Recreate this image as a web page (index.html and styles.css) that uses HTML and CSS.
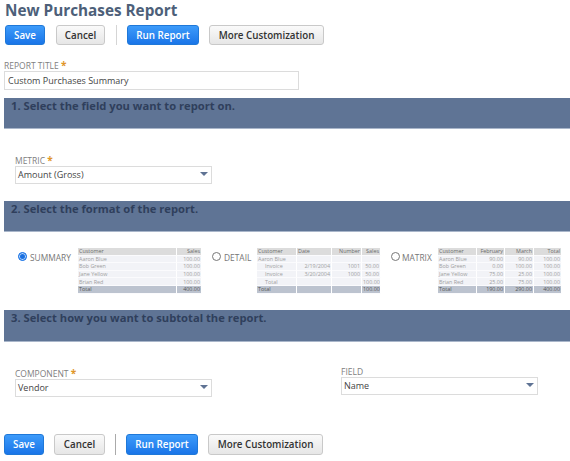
FILE: index.html
```html
<!DOCTYPE html>
<html>
<head>
    <title>New Purchases Report</title>
    <link rel="stylesheet" href="styles.css">
</head>
<body>
    <h1 class="page-title">New Purchases Report</h1>

    <div class="toolbar">
        <button class="btn btn-save">Save</button>
        <button class="btn btn-cancel">Cancel</button>
        <span class="divider"></span>
        <button class="btn btn-run">Run Report</button>
        <button class="btn btn-more">More Customization</button>
    </div>

    <div class="title-field">
        <label class="label">REPORT TITLE <span class="star">*</span></label>
        <div class="input">Custom Purchases Summary</div>
    </div>

    <h2 class="band">1. Select the field you want to report on.</h2>

    <div class="metric-field">
        <label class="label">METRIC <span class="star">*</span></label>
        <div class="input select">Amount (Gross)<span class="arrow"></span></div>
    </div>

    <h2 class="band">2. Select the format of the report.</h2>

    <div class="formats">
        <div class="format format-summary">
            <span class="radio radio-on"></span>
            <span class="format-name">SUMMARY</span>
            <table class="sample">
                <tr><th>Customer</th><th class="num">Sales</th></tr>
                <tr><td>Aaron Blue</td><td class="num">100.00</td></tr>
                <tr><td>Bob Green</td><td class="num">100.00</td></tr>
                <tr><td>Jane Yellow</td><td class="num">100.00</td></tr>
                <tr><td>Brian Red</td><td class="num">100.00</td></tr>
                <tr class="total"><td>Total</td><td class="num">400.00</td></tr>
            </table>
        </div>
        <div class="format format-detail">
            <span class="radio"></span>
            <span class="format-name">DETAIL</span>
            <table class="sample">
                <tr><th>Customer</th><th>Date</th><th class="num">Number</th><th class="num">Sales</th></tr>
                <tr><td>Aaron Blue</td><td></td><td></td><td></td></tr>
                <tr><td class="indent">Invoice</td><td class="num">2/19/2004</td><td class="num">1001</td><td class="num">50.00</td></tr>
                <tr><td class="indent">Invoice</td><td class="num">3/20/2004</td><td class="num">1000</td><td class="num">50.00</td></tr>
                <tr><td class="indent">Total</td><td></td><td></td><td class="num">100.00</td></tr>
                <tr class="total"><td>Total</td><td></td><td></td><td class="num">100.00</td></tr>
            </table>
        </div>
        <div class="format format-matrix">
            <span class="radio"></span>
            <span class="format-name">MATRIX</span>
            <table class="sample">
                <tr><th>Customer</th><th class="num">February</th><th class="num">March</th><th class="num">Total</th></tr>
                <tr><td>Aaron Blue</td><td class="num">90.00</td><td class="num">90.00</td><td class="num">100.00</td></tr>
                <tr><td>Bob Green</td><td class="num">0.00</td><td class="num">100.00</td><td class="num">100.00</td></tr>
                <tr><td>Jane Yellow</td><td class="num">75.00</td><td class="num">25.00</td><td class="num">100.00</td></tr>
                <tr><td>Brian Red</td><td class="num">25.00</td><td class="num">75.00</td><td class="num">100.00</td></tr>
                <tr class="total"><td>Total</td><td class="num">190.00</td><td class="num">290.00</td><td class="num">400.00</td></tr>
            </table>
        </div>
    </div>

    <h2 class="band band-three">3. Select how you want to subtotal the report.</h2>

    <div class="subtotal">
        <div class="component-field">
            <label class="label">COMPONENT <span class="star">*</span></label>
            <div class="input select">Vendor<span class="arrow"></span></div>
        </div>
        <div class="field-field">
            <label class="label">FIELD</label>
            <div class="input select">Name<span class="arrow"></span></div>
        </div>
    </div>

    <div class="toolbar toolbar-bottom">
        <button class="btn btn-save">Save</button>
        <button class="btn btn-cancel">Cancel</button>
        <span class="divider"></span>
        <button class="btn btn-run">Run Report</button>
        <button class="btn btn-more">More Customization</button>
    </div>
</body>
</html>
```

FILE: styles.css
```css
body {
    margin: 0;
    height: 461px;
    overflow: hidden;
    background-color: #fff;
    font-family: "Open Sans", sans-serif;
    color: #333;
}

.page-title {
    margin: 0 0 0 5px;
    height: 25px;
    font-size: 15.3px;
    line-height: 21px;
    font-weight: 700;
    color: #4d5f79;
}

.toolbar {
    display: flex;
    align-items: center;
    height: 20px;
    padding-left: 5px;
}

.btn {
    height: 20px;
    padding: 0;
    border-radius: 3px;
    font-family: inherit;
    font-size: 9.8px;
    font-weight: 600;
}

.btn-save,
.btn-run {
    border: 1px solid #1f78d8;
    background: linear-gradient(#3d9bfa, #1a75e8);
    color: #fff;
}

.btn-cancel,
.btn-more {
    border: 1px solid #c9c9c9;
    background: linear-gradient(#fafafa, #e6e6e6);
    color: #333;
}

.btn-save {
    width: 40px;
}

.btn-cancel {
    width: 49px;
    margin-left: 11px;
}

.btn-run {
    width: 72px;
}

.btn-more {
    width: 115px;
    margin-left: 10px;
}

.divider {
    width: 1px;
    height: 20px;
    margin: 0 10px 0 11px;
    background-color: #d5d5d5;
}

.label {
    display: block;
    height: 11px;
    font-size: 8.5px;
    line-height: 11px;
    color: #808080;
}

.star {
    color: #e0962a;
    font-size: 10px;
    font-weight: 700;
}

.input {
    position: relative;
    box-sizing: border-box;
    height: 18px;
    padding-left: 2px;
    border: 1px solid #dcdcdc;
    background-color: #fff;
    font-size: 9px;
    line-height: 16px;
    color: #444;
}

.arrow {
    position: absolute;
    top: 5px;
    right: 3px;
    border-left: 4.5px solid transparent;
    border-right: 4.5px solid transparent;
    border-top: 4.5px solid #5f7394;
}

.title-field {
    width: 295px;
    margin: 15px 0 0 4px;
}

.title-field .input {
    height: 19px;
    padding-left: 3px;
    line-height: 17px;
}

.band {
    box-sizing: border-box;
    height: 31px;
    margin: 8px 0 0 4px;
    padding-left: 7px;
    background-color: #5f7495;
    border-bottom: 1px solid #a9b6ca;
    font-size: 11.2px;
    line-height: 15px;
    font-weight: 700;
    color: #2f3f5c;
}

.metric-field {
    width: 197px;
    margin: 26px 0 17px 15px;
}

.metric-field + .band {
    margin-top: 0;
}

.formats {
    position: relative;
    height: 78px;
}

.format {
    position: absolute;
    top: 16px;
    display: flex;
    align-items: flex-start;
}

.format-summary {
    left: 18px;
}

.format-detail {
    left: 212px;
}

.format-matrix {
    left: 391px;
}

.radio {
    box-sizing: border-box;
    width: 9px;
    height: 9px;
    margin-top: 4px;
    border: 1px solid #777;
    border-radius: 50%;
    background-color: #fff;
}

.radio-on {
    border: 1px solid #1a75e8;
    background-color: #1a6fe0;
    box-shadow: inset 0 0 0 1px #bcd8f8;
}

.format-name {
    flex: none;
    margin: 4px 0 0 3px;
    font-size: 8.4px;
    line-height: 11px;
    color: #777;
}

.format-summary .format-name {
    width: 48px;
}

.format-detail .format-name {
    width: 33px;
}

.format-matrix .format-name {
    width: 36px;
    margin-left: 2px;
}

.sample {
    width: 124px;
    border-collapse: separate;
    border-spacing: 0;
    table-layout: fixed;
    font-size: 5.4px;
    color: #a0a0a0;
}

.sample th,
.sample td {
    box-sizing: border-box;
    height: 7.6px;
    padding: 0 1px;
    border-right: 1px solid #fff;
    border-bottom: 1px solid #fbfbfd;
    line-height: 6px;
    font-weight: 400;
    text-align: left;
    white-space: nowrap;
    overflow: hidden;
    background-color: #f2f3f7;
}

.sample th {
    background-color: #dcdcdc;
    color: #6a6a6a;
}

.sample .num {
    text-align: right;
}

.sample .indent {
    padding-left: 8px;
}

.sample .total td {
    background-color: #bcc3cf;
    color: #555;
}

.format-summary th:nth-child(1) {
    width: 99px;
}

.format-detail th:nth-child(1) {
    width: 40px;
}

.format-detail th:nth-child(2) {
    width: 35px;
}

.format-detail th:nth-child(3) {
    width: 30px;
}

.format-matrix th:nth-child(1) {
    width: 39px;
}

.format-matrix th:nth-child(2) {
    width: 28px;
}

.format-matrix th:nth-child(3) {
    width: 29px;
}

.band-three {
    margin-top: 0;
    height: 32px;
}

.subtotal {
    display: flex;
    align-items: flex-start;
    height: 92px;
    padding: 24px 0 0 15px;
    box-sizing: border-box;
}

.component-field {
    width: 197px;
    margin-top: 2px;
}

.field-field {
    width: 197px;
    margin-left: 129px;
}

.toolbar-bottom {
    height: 21px;
    padding-left: 4px;
}

.toolbar-bottom .btn {
    height: 21px;
}

.toolbar-bottom .btn-cancel {
    width: 51px;
    margin-left: 10px;
}

.toolbar-bottom .divider {
    height: 21px;
    margin-left: 10px;
    background-color: #aaa;
}
```
